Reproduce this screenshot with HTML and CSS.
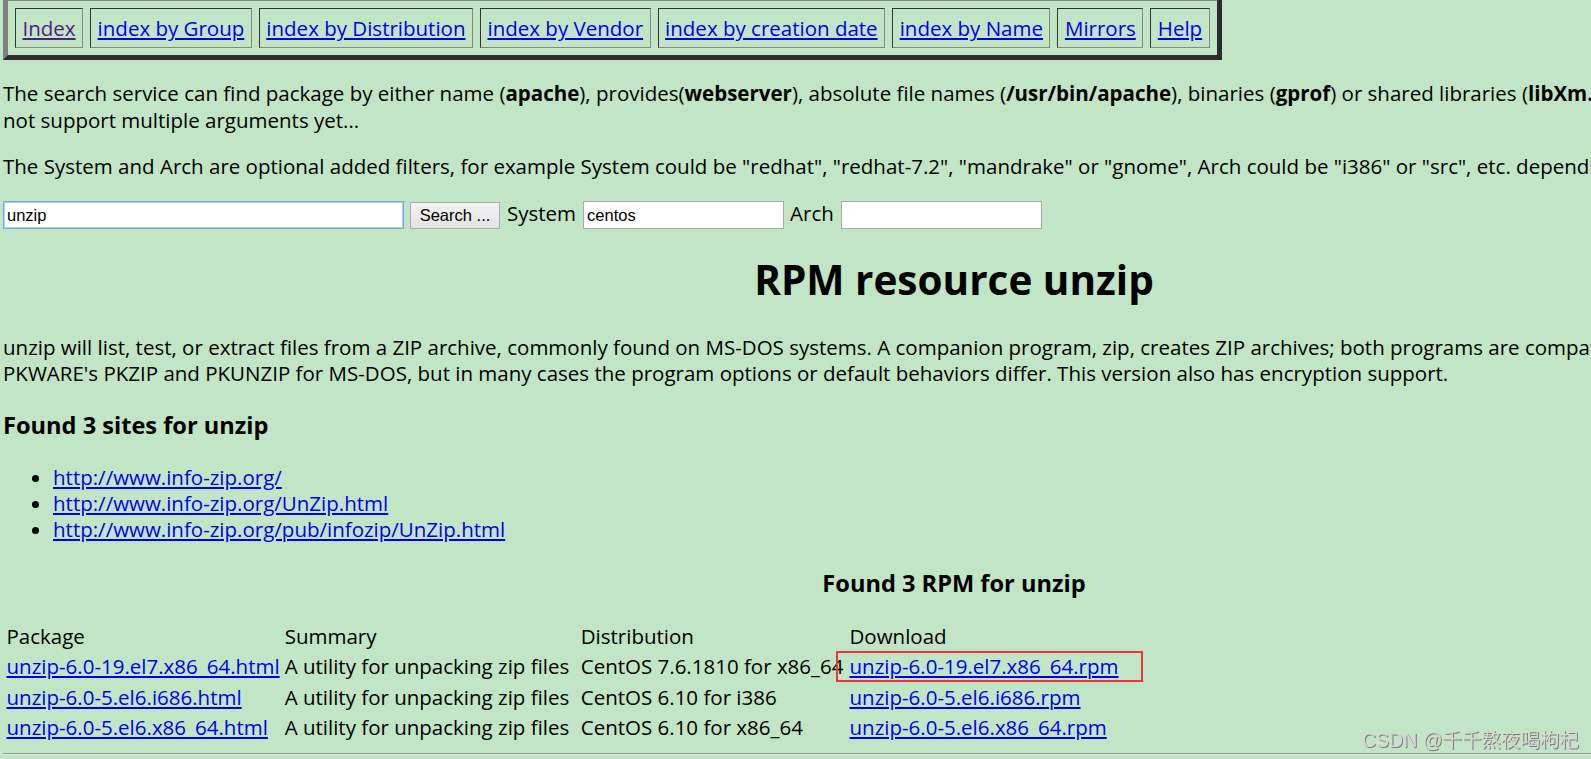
FILE: index.html
```html
<!DOCTYPE html>
<html lang="en">
<head>
<meta charset="utf-8">
<title>RPM resource unzip</title>
<link rel="stylesheet" href="styles.css">
</head>
<body>
<div class="page">
  <table class="nav">
    <tr>
      <td><a class="visited" href="#">Index</a></td>
      <td><a href="#">index by Group</a></td>
      <td><a href="#">index by Distribution</a></td>
      <td><a href="#">index by Vendor</a></td>
      <td><a href="#">index by creation date</a></td>
      <td><a href="#">index by Name</a></td>
      <td><a href="#">Mirrors</a></td>
      <td><a href="#">Help</a></td>
    </tr>
  </table>

  <p>The search service can find package by either name (<b>apache</b>), provides(<b>webserver</b>), absolute file names (<b>/usr/bin/apache</b>), binaries (<b>gprof</b>) or shared libraries (<b>libXm.so.2</b>) in standard path. It does not support multiple arguments yet...</p>

  <p>The System and Arch are optional added filters, for example System could be "redhat", "redhat-7.2", "mandrake" or "gnome", Arch could be "i386" or "src", etc. depending on your system.</p>

  <form class="search">
    <input class="field query" type="text" value="unzip">
    <button class="btn" type="button">Search ...</button>
    <span class="label">System</span>
    <input class="field small" type="text" value="centos">
    <span class="label">Arch</span>
    <input class="field small" type="text" value="">
  </form>

  <h1 class="title">RPM resource unzip</h1>

  <p>unzip will list, test, or extract files from a ZIP archive, commonly found on MS-DOS systems. A companion program, zip, creates ZIP archives; both programs are compatible with archives created by PKWARE's PKZIP and PKUNZIP for MS-DOS, but in many cases the program options or default behaviors differ. This version also has encryption support.</p>

  <h3 class="section">Found 3 sites for unzip</h3>
  <ul class="sites">
    <li><a href="#">http://www.info-zip.org/</a></li>
    <li><a href="#">http://www.info-zip.org/UnZip.html</a></li>
    <li><a href="#">http://www.info-zip.org/pub/infozip/UnZip.html</a></li>
  </ul>

  <h3 class="section centered">Found 3 RPM for unzip</h3>

  <table class="rpms">
    <tr>
      <th>Package</th>
      <th class="sum">Summary</th>
      <th class="dist">Distribution</th>
      <th>Download</th>
    </tr>
    <tr>
      <td><a href="#">unzip-6.0-19.el7.x86_64.html</a></td>
      <td class="sum">A utility for unpacking zip files</td>
      <td class="dist">CentOS 7.6.1810 for x86_64</td>
      <td class="dl"><a href="#">unzip-6.0-19.el7.x86_64.rpm</a><span class="mark"></span></td>
    </tr>
    <tr>
      <td><a href="#">unzip-6.0-5.el6.i686.html</a></td>
      <td class="sum">A utility for unpacking zip files</td>
      <td class="dist">CentOS 6.10 for i386</td>
      <td class="dl"><a href="#">unzip-6.0-5.el6.i686.rpm</a></td>
    </tr>
    <tr>
      <td><a href="#">unzip-6.0-5.el6.x86_64.html</a></td>
      <td class="sum">A utility for unpacking zip files</td>
      <td class="dist">CentOS 6.10 for x86_64</td>
      <td class="dl"><a href="#">unzip-6.0-5.el6.x86_64.rpm</a></td>
    </tr>
  </table>
  <hr class="rule">
</div>
<div class="watermark">CSDN @千千熬夜喝枸杞</div>
</body>
</html>
```

FILE: styles.css
```css
html, body {
  overflow: hidden;
}

body {
  margin: 0;
  background: #c1e5c5;
  color: #000;
  font-family: "Open Sans", "Noto Sans CJK SC", sans-serif;
  font-size: 20.5px;
  line-height: 26.4px;
}

.page {
  width: 1902px;
  padding: 0 0 0 3px;
}

a {
  color: #0000ee;
}

a.visited {
  color: #551a8b;
}

p {
  margin: 20px 0;
}

/* navigation bar */
.nav {
  margin-top: -4px;
  border: 5px solid;
  border-color: #808080 #2b2b2b #2b2b2b #808080;
  border-spacing: 7px;
}

.nav td {
  padding: 6px 6.5px;
  border: 1px solid;
  border-color: #333 #888 #888 #333;
  white-space: nowrap;
}

/* search form */
.search {
  display: flex;
  align-items: baseline;
  gap: 6px;
  margin: 0;
}

.field {
  box-sizing: border-box;
  height: 28px;
  margin: 0;
  padding: 1px 3px;
  border: 1px solid #a9a9a9;
  background: #fff;
  font-family: "Liberation Sans", Arial, sans-serif;
  font-size: 16.5px;
  color: #000;
}

.field.query {
  width: 401px;
  border-color: #7aa6e4;
  box-shadow: inset 0 0 0 1px #b5cff3;
}

.field.small {
  width: 201px;
}

.btn {
  box-sizing: border-box;
  width: 90px;
  height: 27px;
  margin: 0 1px 0 0;
  padding: 0;
  border: 1px solid #adadad;
  border-radius: 0;
  background: linear-gradient(#f3f3f3, #e2e2e2);
  font-family: "Liberation Sans", Arial, sans-serif;
  font-size: 16.5px;
  color: #000;
}

.label {
  margin-right: 1px;
}

/* headings */
.title {
  margin: 25px 0 27px;
  font-size: 40.5px;
  line-height: 52.8px;
  font-weight: 700;
  text-align: center;
}

.section {
  margin: 23px 0;
  font-size: 23.6px;
  line-height: 30.9px;
  font-weight: 700;
}

.section.centered {
  text-align: center;
  margin: 25px 0 21px;
}

.sites {
  margin: 20px 0;
  padding-left: 50px;
}

/* rpm table */
.rpms {
  border-spacing: 2px;
}

.rpms th {
  font-weight: 400;
  text-align: left;
  padding: 1px 1.5px;
}

.rpms td {
  padding: 1px 1.5px;
  white-space: nowrap;
}

.rpms .sum {
  padding-right: 8px;
}

.rpms .dist {
  padding-right: 2.5px;
}

.rpms td.dl {
  position: relative;
}

.mark {
  position: absolute;
  left: -12px;
  top: -1px;
  width: 307px;
  height: 31px;
  box-sizing: border-box;
  border: 2px solid #e8383d;
}

.rule {
  margin: 10px 0;
  border: 0;
  border-top: 1px solid #9a9a9a;
  border-bottom: 1px solid #d8eedb;
}

/* watermark overlay */
.watermark {
  position: fixed;
  right: 12px;
  bottom: 9px;
  font-family: "Liberation Sans", "Noto Sans CJK SC", sans-serif;
  font-size: 19.5px;
  line-height: 1;
  color: #d6d6d6;
  text-shadow: 1px 1px 0 #7d7d7d;
}
```
